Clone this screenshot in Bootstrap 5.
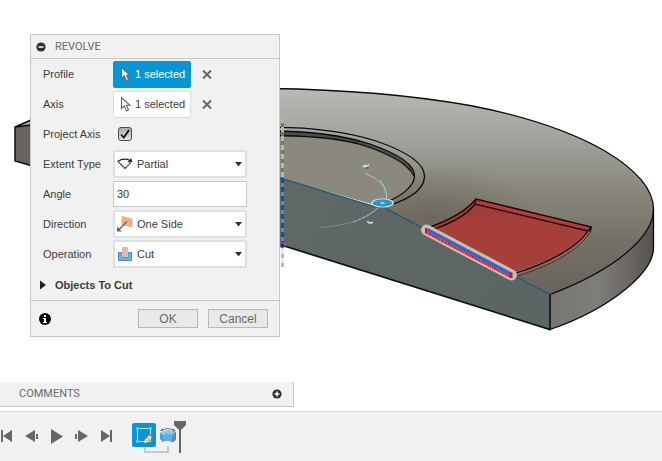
<!DOCTYPE html>
<html lang="en">
<head>
<meta charset="utf-8">
<meta name="viewport" content="width=device-width, initial-scale=1">
<title>Revolve</title>
<link href="https://cdn.jsdelivr.net/npm/bootstrap@5.3.0/dist/css/bootstrap.min.css" rel="stylesheet">
<style>
body{font-family:"Liberation Sans",Arial,sans-serif;font-size:11px;line-height:16px;color:#3c3c3c;background:#fff}
svg{display:block;flex:none}
button{font:inherit;color:inherit}
.plain-btn{border:0;background:none;padding:0}
.workspace{isolation:isolate}
.scene{z-index:-1}
.dialog-panel{width:250px;margin:34px 0 40px 30px;background:#f1f1f1;border:1px solid #c8c8c8}
.dialog-head{height:24px;padding:0 5px;gap:9px;border-bottom:1px solid #c8c8c8;color:#6a6a6a}
.dialog-title,.comments-title{font-family:Roboto,"Liberation Sans",sans-serif;font-size:11px;line-height:16px;font-weight:400}
.prop-row{height:30px;padding-left:12px}
.prop-row>label,.prop-name{width:70px;flex:none;white-space:nowrap}
.pick-btn{width:78px;height:27px;padding:0 0 0 6px;gap:4px;background:#fff;border:1px solid #dcdcdc;border-radius:2px;white-space:nowrap}
.pick-btn.active-pick{background:#0696d7;border-color:#0696d7;color:#fff}
.clear-btn{margin-left:11px}
.combo{width:134px;height:28px;background:#fff;border:2px solid #e0e0e0;border-radius:2px;padding:0 3px 0 2px;gap:4px}
.combo select{appearance:none;border:0;background:none;font:inherit;color:inherit;padding:0;outline:0;min-width:0;height:22px}
.angle-input{width:134px;height:26px;border:1px solid #c8c8c8;padding:0 3px;font:inherit;color:#3c3c3c;background:#fff}
.tick{appearance:none;width:14px;height:14px;margin:0 0 0 5px;border:1px solid #4a4a4a;border-radius:3px;background:linear-gradient(#aaa,#e4e4e4)}
.tick-mark{left:7px;top:2px;pointer-events:none}
.expander{height:31px;padding-left:9px;gap:9px;font-weight:700}
.dialog-foot{height:36px;border-top:1px solid #c8c8c8;padding:0 11px 0 8px;gap:10px}
.foot-btn{width:60px;height:19px;border:1px solid #b8b8b8;background:#e9e9e9;color:#6a6a6a;font-size:12px;line-height:16px;padding:0}
.comments-bar{width:294px;height:25px;margin-bottom:4px;padding:0 11px 0 19px;background:#f1f1f1;border-right:1px solid #c8c8c8;border-bottom:1px solid #c8c8c8;color:#6a6a6a}
.timeline{height:50px;background:#f1f1f1;border-top:1px solid #d8d8d8}
.transport{gap:12px;width:132px}
.feature-btn{width:24px;height:24px;border-radius:2px}
.feature-btn.chosen{background:#0696d7}
.link-line{left:12px;top:23px}
.time-marker{left:42px;top:-2px}
</style>
<script src="https://cdn.jsdelivr.net/npm/bootstrap@5.3.0/dist/js/bootstrap.bundle.min.js"></script>
</head>
<body class="d-flex flex-column min-vh-100">
<main class="workspace position-relative flex-grow-1 d-flex flex-column align-items-start">
<svg class="scene position-absolute top-0 start-0 w-100 h-100" viewBox="0 0 662 411" preserveAspectRatio="xMinYMin slice" role="img" aria-label="Half disc model with revolve preview">
<defs>
<linearGradient id="gTop" x1="0" y1="88" x2="0" y2="294" gradientUnits="userSpaceOnUse"><stop offset="0" stop-color="#b7bab5"/><stop offset=".25" stop-color="#a1a29b"/><stop offset=".5" stop-color="#89877d"/><stop offset=".75" stop-color="#747065"/><stop offset="1" stop-color="#69645b"/></linearGradient>
<radialGradient id="gShade" cx="430" cy="216" r="110" gradientUnits="userSpaceOnUse" gradientTransform="translate(0 108) scale(1 .5)"><stop offset="0" stop-color="#5d554a" stop-opacity=".5"/><stop offset="1" stop-color="#5d554a" stop-opacity="0"/></radialGradient>
<linearGradient id="gSide" x1="550" y1="0" x2="654" y2="0" gradientUnits="userSpaceOnUse"><stop offset="0" stop-color="#77776f"/><stop offset=".45" stop-color="#7e7d79"/><stop offset=".75" stop-color="#6c6865"/><stop offset="1" stop-color="#53514d"/></linearGradient>
<linearGradient id="gCut" x1="280" y1="180" x2="550" y2="330" gradientUnits="userSpaceOnUse"><stop offset="0" stop-color="#606866"/><stop offset="1" stop-color="#5b6563"/></linearGradient>
<linearGradient id="gRed" x1="0" y1="200" x2="0" y2="276" gradientUnits="userSpaceOnUse"><stop offset="0" stop-color="#963d38"/><stop offset=".3" stop-color="#a63e39"/><stop offset="1" stop-color="#a5403a"/></linearGradient>
</defs>
<path d="M15 127 31 120V165L15 161Z" fill="#66645d"/><path d="M15 127 31 120V125Z" fill="#a8aaa4"/>
<path d="M31 120 15 127V161L31 165.500M15 127 31 125" fill="none" stroke="#0b0b0b" stroke-width="1.500"/>
<path d="M550 294.500C615 270 653.500 237 653.500 209V248C653.500 272 612 308 550 329.500Z" fill="url(#gSide)"/>
<path d="M270 88.500C340 89.500 405 94 470 105.500 530 117 575 134 605 151 635 169 653.500 189 653.500 209 653.500 237 615 270 550 294.500L383 207 270 175Z" fill="url(#gTop)"/>
<path d="M270 88.500C340 89.500 405 94 470 105.500 530 117 575 134 605 151 635 169 653.500 189 653.500 209 653.500 237 615 270 550 294.500L383 207 270 175Z" fill="url(#gShade)"/>
<path d="M270 131C315 131 345 136 370 144 399 154 414.500 165 414.500 176 414.500 185 403 196 383 203V207L270 175Z" fill="#8b887e"/>
<path d="M270 131C315 131 345 136 370 144 399 154 414.500 165 414.500 175 406 162 386 152 357 143.500 332 137.500 307 135.500 270 135.500Z" fill="#4d4c47"/>
<g fill="none" stroke="#0b0b0b" stroke-width="1.300">
<path d="M270 127.500C315 127 350 133 376 141 408 152 424.500 164 424.500 176 424.500 188 412 198 390 205"/>
<path d="M270 131C315 131 345 136 370 144 399 154 414.500 165 414.500 176 414.500 185 403 196 386 202"/>
<path d="M270 135.500C307 135.500 332 137.500 357 143.500 389 153 408 164 414 176"/>
<path d="M270 88.500C340 89.500 405 94 470 105.500 530 117 575 134 605 151 635 169 653.500 189 653.500 209 653.500 237 615 270 550 294.500"/>
<path d="M653.500 209V248C653.500 272 612 308 550 329.500"/>
</g>
<path d="M270 175 376 207 384 207.500 550 294.500V329.500L270 241.500Z" fill="url(#gCut)"/>
<path d="M550 294.500V329.500L270 241.500" fill="none" stroke="#0a1418" stroke-width="1.700"/>
<path d="M270 175 376 207H383L550 294.500" fill="none" stroke="#285b73" stroke-width="1.500"/>
<path d="M476 199 591.500 227 590 232C580 251 550 265 514 276L427 228C451 220 466 211 476 199Z" fill="url(#gRed)"/>
<path d="M476 199 591.500 227 588 231 475 204Z" fill="#b93a38"/>
<path d="M591.500 227 590 232C580 251 550 265 514 276L510 273C553 260 580 245 588 231Z" fill="#8f6a62"/>
<path d="M427 228C451 220 466 211 476 199L591.500 227 590 232M433 229.500C452 223 467 215 475 204L588 231C578 247 549 263 513 274M476 199 475 204M588 231 591 227" fill="none" stroke="#160808" stroke-width="1.300"/>
<path d="M590 232C580 250 550 266 516 276.500" fill="none" stroke="#4b302c"/>
<path d="M426.500 230 511.500 275" stroke="#c6bdbb" stroke-width="11" stroke-linecap="round" stroke-linejoin="round"/>
<path d="M425.500 232 511 277" stroke="#f60b10" stroke-width="2.500" stroke-dasharray="2 .5"/>
<path d="M427 229.500 512 274.500" stroke="#2e69c7" stroke-width="3.500"/>
<path d="M426 228V233" stroke="#e30a16" stroke-width="2"/><path d="M511 273V278" stroke="#e30a16" stroke-width="3"/>
<g fill="none" stroke-width="3">
<path d="M282.500 119V178" stroke="#b7b7b2"/><path d="M282.500 123V178" stroke="#777771" stroke-dasharray="4 5"/>
<path d="M282.500 178V245" stroke="#19528e"/><path d="M282.500 183V245" stroke="#538fc4" stroke-dasharray="4 5"/>
<path d="M282.500 249V267" stroke="#e8e8e8"/><path d="M282.500 254V267" stroke="#b8b8b8" stroke-dasharray="4 5"/>
</g>
<circle cx="282.500" cy="245.500" r="2.500" fill="#30255a" stroke="#9173bd"/>
<path d="M365 173Q386 182 387 197" fill="none" stroke="#b9ced4" stroke-width=".8"/><path d="M380 180Q387 188 387 199" fill="none" stroke="#3e8aa8" stroke-width="1.500"/><path d="M380 180Q387 188 386.500 199" fill="none" stroke="#d8e2e4" stroke-width=".8"/>
<path d="M378 208C367 219 350 225 320 227.500" fill="none" stroke="#7d9298" stroke-width=".8"/><path d="M378 208Q367 217 353 222" fill="none" stroke="#a9bec4" stroke-dasharray="4 1"/>
<ellipse cx="382.500" cy="203" rx="11.500" ry="4.600" fill="#dfe9eb"/><ellipse cx="382.500" cy="203" rx="10.200" ry="3.700" fill="#4e98b4"/><ellipse cx="382.500" cy="203" rx="9" ry="3" fill="#2199cf"/><ellipse cx="382.500" cy="203" rx="2.500" ry="1" fill="#abd8e8"/>
<path d="M362.500 167 365 165.500V167.500L369 164.500M367 222 369 221V223L373 222.500" fill="none" stroke="#d8edf2" stroke-width="1.300"/><path d="M364 168H368M368 221H371" stroke="#2d6579"/>
</svg>

<form class="dialog-panel" onsubmit="return false">
<header class="dialog-head d-flex align-items-center">
<button type="button" class="plain-btn" aria-label="Collapse"><svg width="10" height="10" viewBox="0 0 10 10"><circle cx="5" cy="5" r="4.600" fill="#2e2e2e"/><path d="M2.500 5H7.500" stroke="#fff" stroke-width="1.500"/></svg></button>
<h1 class="dialog-title m-0">REVOLVE</h1>
</header>
<div class="prop-row d-flex align-items-center"><span class="prop-name">Profile</span>
<button type="button" class="pick-btn active-pick d-flex align-items-center"><svg width="11" height="16" viewBox="0 0 11 16"><path d="M1.500 1.500V12.500L4.300 10 6.500 15 8.500 14 6.500 9.300H10Z" fill="#fff" stroke="#666" stroke-width="1.100"/></svg>1 selected</button>
<button type="button" class="plain-btn clear-btn" aria-label="Clear profile"><svg width="10" height="9" viewBox="0 0 10 9"><path d="M1 .5 9 8.500M9 .5 1 8.500" stroke="#666" stroke-width="2"/></svg></button></div>
<div class="prop-row d-flex align-items-center"><span class="prop-name">Axis</span>
<button type="button" class="pick-btn d-flex align-items-center"><svg width="11" height="16" viewBox="0 0 11 16"><path d="M1.500 1.500V12.500L4.300 10 6.500 15 8.500 14 6.500 9.300H10Z" fill="#fff" stroke="#666" stroke-width="1.100"/></svg>1 selected</button>
<button type="button" class="plain-btn clear-btn" aria-label="Clear axis"><svg width="10" height="9" viewBox="0 0 10 9"><path d="M1 .5 9 8.500M9 .5 1 8.500" stroke="#666" stroke-width="2"/></svg></button></div>
<div class="prop-row d-flex align-items-center"><label for="project">Project Axis</label>
<span class="position-relative d-flex"><input class="tick" id="project" type="checkbox" checked><svg class="tick-mark position-absolute" width="10" height="10" viewBox="0 0 10 10"><path d="M1 5.500 3.800 8.500 9 1" fill="none" stroke="#111" stroke-width="1.800"/></svg></span></div>
<div class="prop-row d-flex align-items-center"><label for="extent">Extent Type</label>
<div class="combo d-flex align-items-center"><svg width="16" height="14" viewBox="0 0 16 14"><path d="M1.500 5 8 11.500 14 5.500" fill="none" stroke="#333" stroke-width="1.300" stroke-dasharray="2 .5"/><path d="M.5 4.500Q7 .5 13 3.500" fill="none" stroke="#222" stroke-width="1.300"/><path d="M10.500 5.500 15.500 5 14 1Z" fill="#222"/></svg><select class="flex-grow-1" id="extent"><option>Partial</option><option>Full</option></select><svg width="7" height="5" viewBox="0 0 7 5"><path d="M0 0H7L3.500 4.500Z" fill="#333"/></svg></div></div>
<div class="prop-row d-flex align-items-center"><label for="angle">Angle</label><input class="angle-input" id="angle" type="text" value="30"></div>
<div class="prop-row d-flex align-items-center"><label for="direction">Direction</label>
<div class="combo d-flex align-items-center"><svg width="16" height="16" viewBox="0 0 16 16"><path d="M5 .5 15 3V11L5 8.500Z" fill="#f3b183" stroke="#e7a273" stroke-width=".8"/><path d="M10 5.500 2 13.500" stroke="#666" stroke-width="1.500"/><path d="M0 15.500V10.500L5 15.500Z" fill="#666"/></svg><select class="flex-grow-1" id="direction"><option>One Side</option><option>Two Sides</option></select><svg width="7" height="5" viewBox="0 0 7 5"><path d="M0 0H7L3.500 4.500Z" fill="#333"/></svg></div></div>
<div class="prop-row d-flex align-items-center"><label for="operation">Operation</label>
<div class="combo d-flex align-items-center"><svg width="16" height="16" viewBox="0 0 16 16"><path d="M1.500 6.500H5V11.500H11V6.500H14.500V14.500H1.500Z" fill="#6bb2e8" stroke="#4a91c8"/><path d="M5 1H11V11H5Z" fill="#edb3b1"/></svg><select class="flex-grow-1" id="operation"><option>Cut</option><option>Join</option></select><svg width="7" height="5" viewBox="0 0 7 5"><path d="M0 0H7L3.500 4.500Z" fill="#333"/></svg></div></div>
<button type="button" class="plain-btn expander d-flex align-items-center"><svg width="6" height="10" viewBox="0 0 6 10"><path d="M0 .5 6 5 0 9.500Z" fill="#222"/></svg>Objects To Cut</button>
<footer class="dialog-foot d-flex align-items-center">
<button type="button" class="plain-btn me-auto" aria-label="Information"><svg width="12" height="12" viewBox="0 0 12 12"><circle cx="6" cy="6" r="6" fill="#000"/><path d="M5 2H7V4H5ZM4 5H7V9H8V10H4V9H5V6H4Z" fill="#fff"/></svg></button>
<button type="submit" class="foot-btn">OK</button><button type="button" class="foot-btn">Cancel</button>
</footer>
</form>

<section class="comments-bar d-flex align-items-center justify-content-between mt-auto"><span class="comments-title">COMMENTS</span>
<button type="button" class="plain-btn" aria-label="Add comment"><svg width="10" height="10" viewBox="0 0 10 10"><circle cx="5" cy="5" r="4.600" fill="#2e2e2e"/><path d="M2.500 5H7.500M5 2.500V7.500" stroke="#fff" stroke-width="1.500"/></svg></button></section>
</main>
<footer class="timeline d-flex align-items-center">
<div class="transport d-flex align-items-center">
<button type="button" class="plain-btn" aria-label="Go to start"><svg width="13" height="16" viewBox="0 0 13 16"><path d="M1 1H3V13H1ZM12 1V13L3 7Z" fill="#666"/></svg></button>
<button type="button" class="plain-btn" aria-label="Step back"><svg width="13" height="16" viewBox="0 0 13 16"><path d="M10 1V13L0 7ZM11 5H13V10H11Z" fill="#666"/></svg></button>
<button type="button" class="plain-btn" aria-label="Play"><svg width="13" height="16" viewBox="0 0 13 16"><path d="M1 0 13 7.500 1 15Z" fill="#666"/></svg></button>
<button type="button" class="plain-btn" aria-label="Step forward"><svg width="13" height="16" viewBox="0 0 13 16"><path d="M3 1 13 7 3 13ZM0 5H2V10H0Z" fill="#666"/></svg></button>
<button type="button" class="plain-btn" aria-label="Go to end"><svg width="13" height="16" viewBox="0 0 13 16"><path d="M1 1 10 7 1 13ZM10 1H12V13H10Z" fill="#666"/></svg></button>
</div>
<div class="position-relative d-flex mb-1">
<svg class="link-line position-absolute" width="26" height="8" viewBox="0 0 26 8"><path d="M1 0V6H24V0" fill="none" stroke="#c8c8c8" stroke-width="2"/></svg>
<button type="button" class="plain-btn feature-btn chosen position-relative" aria-label="Sketch"><svg width="24" height="24" viewBox="0 0 24 24"><path d="M5.500 5.500H18.500V18.500H5.500Z" fill="none" stroke="#bfe2f5"/><path d="M4 4H7V7H4ZM17 4H20V7H17ZM4 17H7V20H4Z" fill="#67bcec"/><path d="M12 20 13 16.500 17 12.500 19.500 15 15.500 19Z" fill="#f8d36a"/><path d="M12 20 13 16.500 15.500 19Z" fill="#f5eedc"/><path d="M16.500 13 17.500 12 20 14.500 19 15.500Z" fill="#ddd"/><path d="M17.500 12 Q19 10.500 20.200 11.800T20 14.500Z" fill="#e4544c"/></svg></button>
<button type="button" class="plain-btn feature-btn" aria-label="Revolve"><svg width="24" height="24" viewBox="0 0 24 24"><path d="M4 10Q12 5 20 10L19 17.500 16 19Q12 16.500 7 19L4 16Z" fill="#4a9ed9"/><path d="M4 10Q12 5 19 9.500L16.500 12.500Q12 10 7 12.500Z" fill="#8cc9f1"/><path d="M7 12.500Q12 10 16.500 12.500L15.500 18.500Q12 16 7 18.500Z" fill="#5eb0e6"/><path d="M5 7Q12 4 18 7M17 11.500 19.500 9.500V16.500L16.500 19Z" fill="none" stroke="#777"/><path d="M4 8 6.500 5.500 7 8ZM17 5.500 20 8.500 16.500 8.500Z" fill="#666"/></svg></button>
<svg class="time-marker position-absolute" width="12" height="32" viewBox="0 0 12 32"><path d="M0 0H12V4L7 9V32H5V9L0 4Z" fill="#666"/></svg>
</div>
</footer>
</body>
</html>
